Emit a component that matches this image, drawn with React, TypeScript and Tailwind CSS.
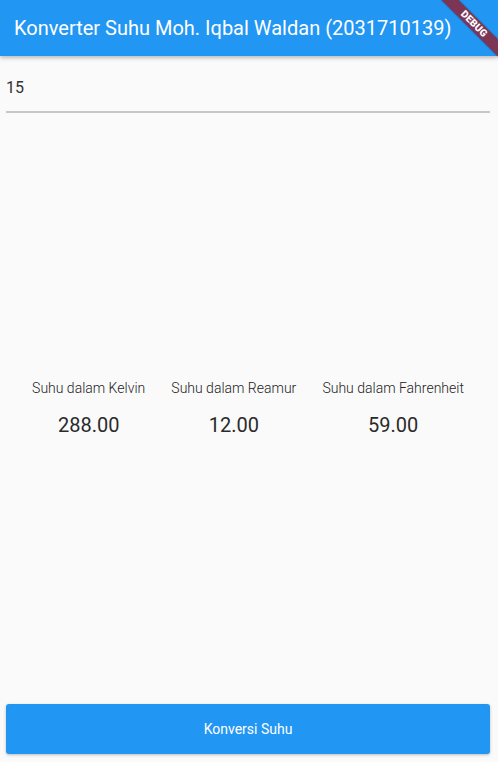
// temperature converter screen: input celsius, show kelvin / reamur / fahrenheit
import React, { useState } from "react";

const font = { fontFamily: "Roboto, 'Noto Sans', sans-serif" };

function DebugBanner() {
  return (
    <div className="pointer-events-none absolute right-0 top-0 z-20 h-[80px] w-[80px] overflow-hidden">
      <div className="absolute left-[16px] top-[18px] flex h-[12px] w-[80px] rotate-45 items-center justify-center bg-[#7d3556] shadow-[0_0_2px_rgba(0,0,0,0.4)]">
        <span className="text-[10px] font-black leading-none tracking-[0.2px] text-white">
          DEBUG
        </span>
      </div>
    </div>
  );
}

function Result({ label, value }: { label: string; value: string }) {
  return (
    <div className="flex flex-col items-center">
      <span className="text-[14px] font-light leading-[16px] text-[#222222]">{label}</span>
      <span className="mt-[17px] text-[20px] leading-[24px] text-[#2a2a2a]">{value}</span>
    </div>
  );
}

export default function App() {
  const [input, setInput] = useState("15");
  const [celsius, setCelsius] = useState(15);

  const kelvin = celsius + 273;
  const reamur = (celsius * 4) / 5;
  const fahrenheit = (celsius * 9) / 5 + 32;

  return (
    <div className="relative flex h-[762px] w-full flex-col overflow-hidden bg-[#fafafa]" style={font}>
      <header className="z-10 flex h-[56px] shrink-0 items-center bg-[#2196f3] pl-[14px] shadow-[0_2px_4px_rgba(0,0,0,0.25)]">
        <h1 className="text-[20px] font-normal text-white">
          Konverter Suhu Moh. Iqbal Waldan (2031710139)
        </h1>
      </header>
      <DebugBanner />

      <main className="flex flex-1 flex-col pl-[6px] pr-[8px] pb-[8px] pt-[8px]">
        <div className="flex h-[47px] items-center">
          <input
            value={input}
            onChange={(e) => setInput(e.target.value)}
            className="w-full bg-transparent text-[16px] text-[#333333] outline-none"
          />
        </div>
        <div className="h-[2px] bg-[#c6c6c6]" />

        <div className="flex flex-1 items-center justify-evenly">
          <Result label="Suhu dalam Kelvin" value={kelvin.toFixed(2)} />
          <Result label="Suhu dalam Reamur" value={reamur.toFixed(2)} />
          <Result label="Suhu dalam Fahrenheit" value={fahrenheit.toFixed(2)} />
        </div>

        <button
          onClick={() => setCelsius(parseFloat(input) || 0)}
          className="h-[50px] w-full rounded-[3px] bg-[#2196f3] text-[14px] font-normal text-white shadow-[0_1px_3px_rgba(0,0,0,0.25)]"
        >
          Konversi Suhu
        </button>
      </main>
    </div>
  );
}
